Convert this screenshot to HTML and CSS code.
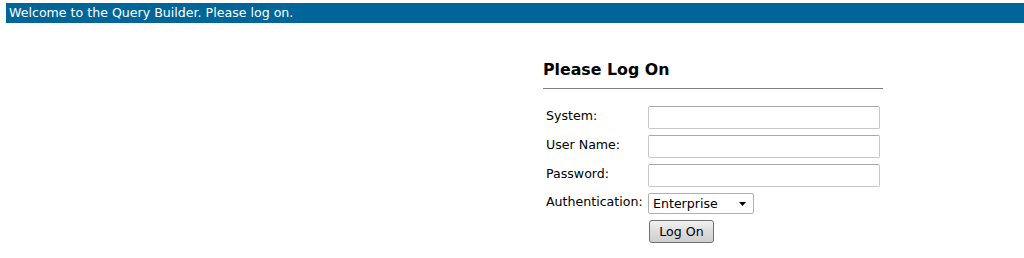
FILE: index.html
```html
<!DOCTYPE html>
<html lang="en">
    <head>
        <meta charset="UTF-8" />
        <meta name="viewport" content="width=device-width, initial-scale=1.0" />
        <link rel="stylesheet" href="styles.css">
        <title>Query Builder</title>
    </head>
    <body>
        <div class="banner">Welcome to the Query Builder. Please log on.</div>

        <div class="logon">
            <h2 class="logon__title">Please Log On</h2>

            <form class="logon__form">
                <label class="logon__label" for="system">System:</label>
                <input class="logon__input" id="system" type="text" />

                <label class="logon__label" for="user">User Name:</label>
                <input class="logon__input" id="user" type="text" />

                <label class="logon__label" for="pass">Password:</label>
                <input class="logon__input" id="pass" type="password" />

                <label class="logon__label" for="auth">Authentication:</label>
                <div class="logon__select">
                    <span>Enterprise</span>
                    <svg width="8" height="4" viewBox="0 0 8 4"><path d="M0 0h7L3.5 4z" fill="#000"/></svg>
                </div>

                <span></span>
                <div><button class="logon__button" type="button">Log On</button></div>
            </form>
        </div>
    </body>
</html>
```

FILE: styles.css
```css
*,
*::before,
*::after {
    box-sizing: border-box;
}

body {
    margin: 3px 0 0 6px;
    font-family: 'DejaVu Sans', Verdana, sans-serif;
    font-size: 12.6px;
    color: #000;
    background: #fff;
}

.banner {
    background: #006699;
    color: #fff;
    height: 20px;
    line-height: 20px;
    padding-left: 3px;
}

.logon {
    width: 340px;
    margin: 37px 0 0 537px;
}

.logon__title {
    margin: 0;
    font-size: 15.8px;
    font-weight: bold;
    line-height: 20px;
    padding-bottom: 8px;
    border-bottom: 1px solid #808080;
}

.logon__form {
    display: grid;
    grid-template-columns: 102px 232px;
    row-gap: 6px;
    align-items: center;
    margin-top: 17px;
    padding-left: 3px;
}

.logon__label {
    line-height: 16px;
    margin-top: -3px;
}

.logon__input {
    height: 23px;
    width: 232px;
    border: 1px solid #c8c8c8;
    border-top-color: #a8a8a8;
    border-radius: 2px;
    margin: 0;
}

.logon__select {
    width: 106px;
    height: 21px;
    border: 1px solid #b0b0b0;
    border-radius: 2px;
    display: flex;
    align-items: center;
    justify-content: space-between;
    padding: 0 6px 0 4px;
}

.logon__button {
    margin: 0 0 0 1px;
    height: 23px;
    width: 65px;
    font-family: inherit;
    font-size: 12.6px;
    border: 1px solid #707070;
    border-radius: 3px;
    background: linear-gradient(#f2f2f2, #dcdcdc 50%, #cfcfcf);
    padding: 0;
}
```
